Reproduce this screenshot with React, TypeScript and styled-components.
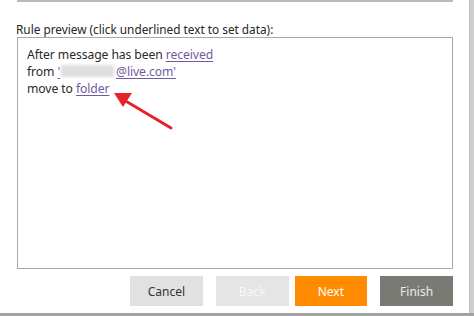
import React from "react";
import styled, { createGlobalStyle } from "styled-components";

const Global = createGlobalStyle`
  html, body { margin: 0; padding: 0; }
  body {
    width: 474px; height: 316px; overflow: hidden;
    background: #c9c9c9;
    font-family: "Noto Sans", "Open Sans", sans-serif;
  }
`;

const Page = styled.div`
  position: relative;
  width: 474px;
  height: 316px;
  display: flex;
  flex-direction: column;
  background: #c4c4c4;
`;

const Dialog = styled.div`
  width: 469px;
  height: 313px;
  background: #ffffff;
  display: flex;
  flex-direction: column;
`;

const BottomEdge = styled.div`
  width: 474px;
  height: 3px;
  background: #a2a2a2;
`;

const TopBar = styled.div`
  margin-left: 17px;
  width: 436px;
  height: 2px;
  background: #bababa;
`;

const Label = styled.div`
  margin-top: 19px;
  margin-left: 16px;
  font-size: 11.8px;
  line-height: 16px;
  color: #262626;
  white-space: nowrap;
`;

const PreviewBox = styled.div`
  position: relative;
  margin-left: 17px;
  width: 436px;
  height: 232px;
  box-sizing: border-box;
  border: 1px solid #a8a8a8;
  padding: 8px 9px;
  font-size: 12.2px;
  letter-spacing: -0.1px;
  line-height: 17px;
  color: #2a2a2a;
`;

const Line = styled.div`
  white-space: nowrap;
`;

const Link = styled.span`
  color: #6f5aa0;
  text-decoration: underline;
  text-underline-offset: 2px;
`;

const Redacted = styled.span`
  display: inline-block;
  width: 53px;
  height: 12px;
  margin: 0 2px -1px 1px;
  background: #dedede;
  filter: blur(1.5px);
`;

const Arrow = styled.svg`
  position: absolute;
  left: 0;
  top: 0;
  pointer-events: none;
`;

const Footer = styled.div`
  margin-top: 7px;
  margin-left: 130px;
  width: 323px;
  display: flex;
`;

const Button = styled.div<{ $bg: string; $fg: string; $gap: number }>`
  width: 73px;
  height: 30px;
  margin-left: ${(p) => p.$gap}px;
  background: ${(p) => p.$bg};
  color: ${(p) => p.$fg};
  font-size: 12px;
  display: flex;
  align-items: center;
  justify-content: center;
`;

const SideStrip = styled.div`
  position: absolute;
  right: 0;
  top: 0;
  width: 5px;
  height: 313px;
  background: #cfcfcf;
  border-left: 1px solid #bdbdbd;
  box-sizing: border-box;
`;

export default function App() {
  return (
    <>
      <Global />
      <Page>
        <Dialog>
          <TopBar />
          <Label>Rule preview (click underlined text to set data):</Label>
          <PreviewBox>
            <Line>
              After message has been <Link>received</Link>
            </Line>
            <Line>
              from <Link>'<Redacted />@live.com'</Link>
            </Line>
            <Line>
              move to <Link>folder</Link>
            </Line>
            <Arrow width="436" height="232" viewBox="0 0 436 232">
              <line x1="153" y1="90" x2="106" y2="62" stroke="#e5232a" strokeWidth="3" strokeLinecap="round" />
              <polygon points="96,55 114,55 105,69" fill="#e5232a" />
            </Arrow>
          </PreviewBox>
          <Footer>
            <Button $bg="#e1e1e1" $fg="#333333" $gap={0}>Cancel</Button>
            <Button $bg="#e5e5e5" $fg="#f7f7f7" $gap={13}>Back</Button>
            <Button $bg="#ff8c00" $fg="#ffffff" $gap={6}>Next</Button>
            <Button $bg="#7a7a75" $fg="#ececec" $gap={13}>Finish</Button>
          </Footer>
        </Dialog>
        <BottomEdge />
        <SideStrip />
      </Page>
    </>
  );
}
